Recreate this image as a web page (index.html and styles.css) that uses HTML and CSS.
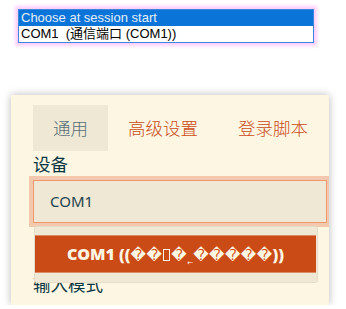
FILE: index.html
```html
<!DOCTYPE html>
<html>
<head>
<meta charset="utf-8">
<link rel="stylesheet" href="styles.css">
</head>
<body>
<div class="listbox">
  <div class="opt selected">Choose at session start</div>
  <div class="opt">COM1&nbsp; (通信端口 (COM1))</div>
</div>

<div class="panel">
  <div class="tabs">
    <div class="tab active">通用</div>
    <div class="tab">高级设置</div>
    <div class="tab">登录脚本</div>
  </div>
  <div class="label">设备</div>
  <div class="field">COM1</div>
  <div class="label label-mode">输入模式</div>

  <div class="dropdown">
    <div class="item">COM1 ((<span class="rep">��</span><span class="box"></span><span class="rep">�</span><span class="arrow">←</span><span class="rep">�����</span>))</div>
  </div>
</div>
</body>
</html>
```

FILE: styles.css
```css
html, body {
  margin: 0;
  padding: 0;
  background: #ffffff;
  overflow: hidden;
}

body {
  padding: 9px 0 0 0;
  font-family: "Noto Sans", "Noto Sans CJK SC", sans-serif;
}

.listbox {
  margin-left: 18px;
  width: 294px;
  border: 1px solid #3d86dc;
  background: #ffffff;
  box-shadow: 0 0 3px 3px rgba(250, 150, 250, 0.45);
  font-family: "Liberation Sans", "Noto Sans CJK SC", sans-serif;
  font-size: 13px;
}

.opt {
  height: 16px;
  line-height: 16px;
  padding-left: 2px;
  color: #000000;
  white-space: nowrap;
}

.opt.selected {
  background: #0b74d8;
  color: #e6effa;
}

.panel {
  position: relative;
  margin: 52px 0 0 11px;
  width: 296px;
  padding: 10px 0 9px 22px;
  background: #fdf6e3;
  box-shadow: 0 0 8px rgba(0, 0, 0, 0.28);
  overflow: hidden;
}

.tabs {
  display: flex;
  height: 46px;
}

.tab {
  padding: 0 20px;
  font-family: "Noto Sans CJK SC", sans-serif;
  font-weight: 300;
  font-size: 17.5px;
  line-height: 46px;
  color: #cb4b16;
}

.tab.active {
  background: #eee8d5;
  color: #586e75;
}

.label {
  font-family: "Noto Sans CJK SC", sans-serif;
  font-size: 17.5px;
  line-height: 25px;
  height: 25px;
  color: #073642;
}

.label-mode {
  margin-top: 48px;
}

.field {
  margin-top: 4px;
  height: 41px;
  border: 1px solid #ef9770;
  background: #eee8d5;
  box-shadow: 0 0 0 4px #f4c8ae;
  padding-left: 16px;
  width: 276px;
  line-height: 41px;
  font-size: 15px;
  color: #22434c;
}

.dropdown {
  position: absolute;
  left: 23px;
  top: 131px;
  width: 282px;
  height: 47px;
  padding: 8px 0 0 0;
  background: #eee8d5;
  border: 1px solid #e3ddca;
  border-radius: 3px;
}

.item {
  height: 36px;
  margin: 0 1px 0 0;
  background: #cb4b16;
  border-top: 1px solid #d98a66;
  border-bottom: 1px solid #d98a66;
  color: #fdf6e3;
  font-family: "Open Sans", sans-serif;
  font-weight: 800;
  font-size: 16px;
  line-height: 36px;
  text-align: center;
  white-space: nowrap;
}

.rep {
  font-family: "DejaVu Sans", sans-serif;
  font-weight: 400;
  font-size: 15px;
  letter-spacing: 0.5px;
}

.box {
  display: inline-block;
  width: 5px;
  height: 10px;
  border: 1px solid #fdf6e3;
  margin: 0 1px;
  vertical-align: -1px;
}

.arrow {
  font-family: "DejaVu Sans", sans-serif;
  font-weight: 400;
  font-size: 7px;
  vertical-align: -5px;
}
```
